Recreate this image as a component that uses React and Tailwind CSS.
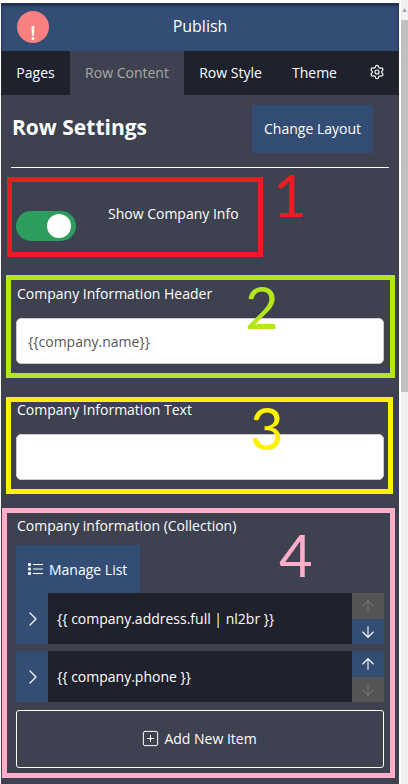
import React from 'react';
import { Settings, ChevronRight, ArrowUp, ArrowDown, SquarePlus } from 'lucide-react';

function ListRow({ text, canUp, canDown, className }) {
  return (
    <div className={`flex h-[51px] ${className}`}>
      <div className="w-8 pl-[2px] bg-[#334d75] flex items-center justify-center text-white">
        <ChevronRight size={24} strokeWidth={1.25} />
      </div>
      <div className="flex-1 bg-[#1f212d] pl-[9px] flex items-center text-white text-[14px]">{text}</div>
      <div className="w-8 flex flex-col">
        <div className={`h-[26px] flex items-center justify-center ${canUp ? 'bg-[#334d75] text-white' : 'bg-[#555] text-[#727272]'}`}>
          <ArrowUp size={18} strokeWidth={1.5} />
        </div>
        <div className={`flex-1 flex items-center justify-center ${canDown ? 'bg-[#334d75] text-white' : 'bg-[#555] text-[#727272]'}`}>
          <ArrowDown size={18} strokeWidth={1.5} />
        </div>
      </div>
    </div>
  );
}

export default function App() {
  return (
    <div className="w-[408px] h-[784px] overflow-hidden flex bg-white font-['Open_Sans',sans-serif]">
      <div className="w-[398px] h-full ml-px mt-[3px] bg-[#3e414f] flex flex-col shrink-0 overflow-hidden">
        {/* top bar */}
        <div className="h-12 shrink-0 bg-[#334d75] pb-[2px] flex items-center justify-center relative text-white text-[16px] shadow-[inset_0_3px_3px_rgba(20,30,50,0.6)]">
          Publish
          <div className="absolute left-4 top-2 w-8 h-8 rounded-full bg-[#f98080] flex items-end justify-center text-[#fff8e8] text-[20px] font-semibold leading-[20px]">!</div>
        </div>
        <div className="h-11 shrink-0 bg-[#1f212d] flex items-center text-white text-[14px]">
          <div className="w-[69px] h-full pb-[2px] flex items-center justify-center">Pages</div>
          <div className="w-[114px] h-full pb-[2px] flex items-center justify-center bg-[#3e414f] text-[#a9a9a9]">Row Content</div>
          <div className="w-[93px] h-full pb-[2px] flex items-center justify-center">Row Style</div>
          <div className="w-[75px] h-full pb-[2px] flex items-center justify-center">Theme</div>
          <div className="flex-1 h-full pb-[2px] flex items-center justify-center pl-[3px]"><Settings size={16} strokeWidth={1.75} /></div>
        </div>

        <div className="flex items-center justify-between pl-[11px] pr-[26px] pt-[10px]">
          <h2 className="text-white text-[21px] font-bold -mt-[2px]">Row Settings</h2>
          <button className="w-[121px] h-12 pb-[2px] bg-[#334d75] text-white text-[14px]">Change Layout</button>
        </div>
        <hr className="mx-[10px] mt-[14px] border-0 h-px bg-white" />

        <div className="relative w-[256px] h-[80px] ml-[6px] mt-[9px] border-[5px] border-[#ed1c24] shrink-0">
          <div className="absolute left-[4px] top-[29px] w-[60px] h-[30px] rounded-full bg-[#2e9e5f]">
            <div className="absolute right-[5px] top-[3px] w-6 h-6 rounded-full bg-white"></div>
          </div>
          <div className="absolute left-[96px] top-[22px] text-white text-[14px] leading-[20px]">Show Company Info</div>
          <span className="absolute left-[261px] top-[-25px] text-[#ed1c24] font-['Lato',sans-serif] text-[58px] leading-[76px]">1</span>
        </div>

        <div className="relative w-[389px] h-[103px] ml-[5px] mt-[18px] border-[5px] border-[#b5e61d] pl-[5px] pr-[6px] pt-[4px] shrink-0">
          <div className="pl-px text-white text-[14px] leading-[20px]">Company Information Header</div>
          <div className="mt-[14px] h-[46px] rounded-[5px] bg-white border border-[#ccc] pl-[11px] flex items-center text-[#555] text-[14px]">{'{{company.name}}'}</div>
          <span className="absolute left-[234px] top-[-11px] text-[#b5e61d] font-['Lato',sans-serif] text-[58px] leading-[76px]">2</span>
        </div>

        <div className="relative w-[387px] h-[97px] ml-[5px] mt-[19px] border-[5px] border-[#fff200] pl-[5px] pr-[4px] shrink-0">
          <div className="pl-px text-white text-[14px] leading-[20px] mt-[-2px]">Company Information Text</div>
          <div className="mt-[14px] h-[46px] rounded-[5px] bg-white border border-[#ccc]"></div>
          <span className="absolute left-[239px] top-[-12px] text-[#fff200] font-['Lato',sans-serif] text-[58px] leading-[76px]">3</span>
        </div>

        <div className="relative w-[393px] h-[270px] ml-px mt-[14px] border-[5px] border-[#ffaec9] pl-[9px] pr-[6px] pt-[3px] shrink-0">
          <div className="pl-px text-white text-[14px] leading-[20px]">Company information (Collection)</div>
          <div className="mt-[9px] w-[124px] h-12 pl-3 bg-[#334d75] text-white text-[14px] flex items-center gap-[6px]">
            <svg width="15" height="12" viewBox="0 0 15 12" fill="currentColor">
              <rect x="0" y="0" width="3" height="3" rx="1" />
              <rect x="0" y="4.5" width="3" height="3" rx="1" />
              <rect x="0" y="9" width="3" height="3" rx="1" />
              <rect x="5" y="1" width="10" height="1" />
              <rect x="5" y="5.5" width="10" height="1" />
              <rect x="5" y="10" width="10" height="1" />
            </svg>
            Manage List
          </div>
          <ListRow text="{{ company.address.full | nl2br }}" canDown />
          <ListRow text="{{ company.phone }}" canUp className="mt-[7px]" />
          <div className="mt-2 h-[58px] pb-[2px] pr-[2px] rounded-[3px] border border-white flex items-center justify-center gap-[4px] text-white text-[14px]">
            <SquarePlus size={19} strokeWidth={1.25} />Add New Item
          </div>
          <span className="absolute left-[272px] top-[4px] text-[#ffaec9] font-['Lato',sans-serif] text-[58px] leading-[76px]">4</span>
        </div>
      </div>

      {/* scrollbar */}
      <div className="flex-1 ml-[2px] bg-[#f1f1f1] flex flex-col">
        <div className="h-5 flex items-center justify-center text-[#a3a3a3] text-[7px]">▲</div>
        <div className="h-[372px] bg-[#c1c1c1]"></div>
      </div>
    </div>
  );
}
